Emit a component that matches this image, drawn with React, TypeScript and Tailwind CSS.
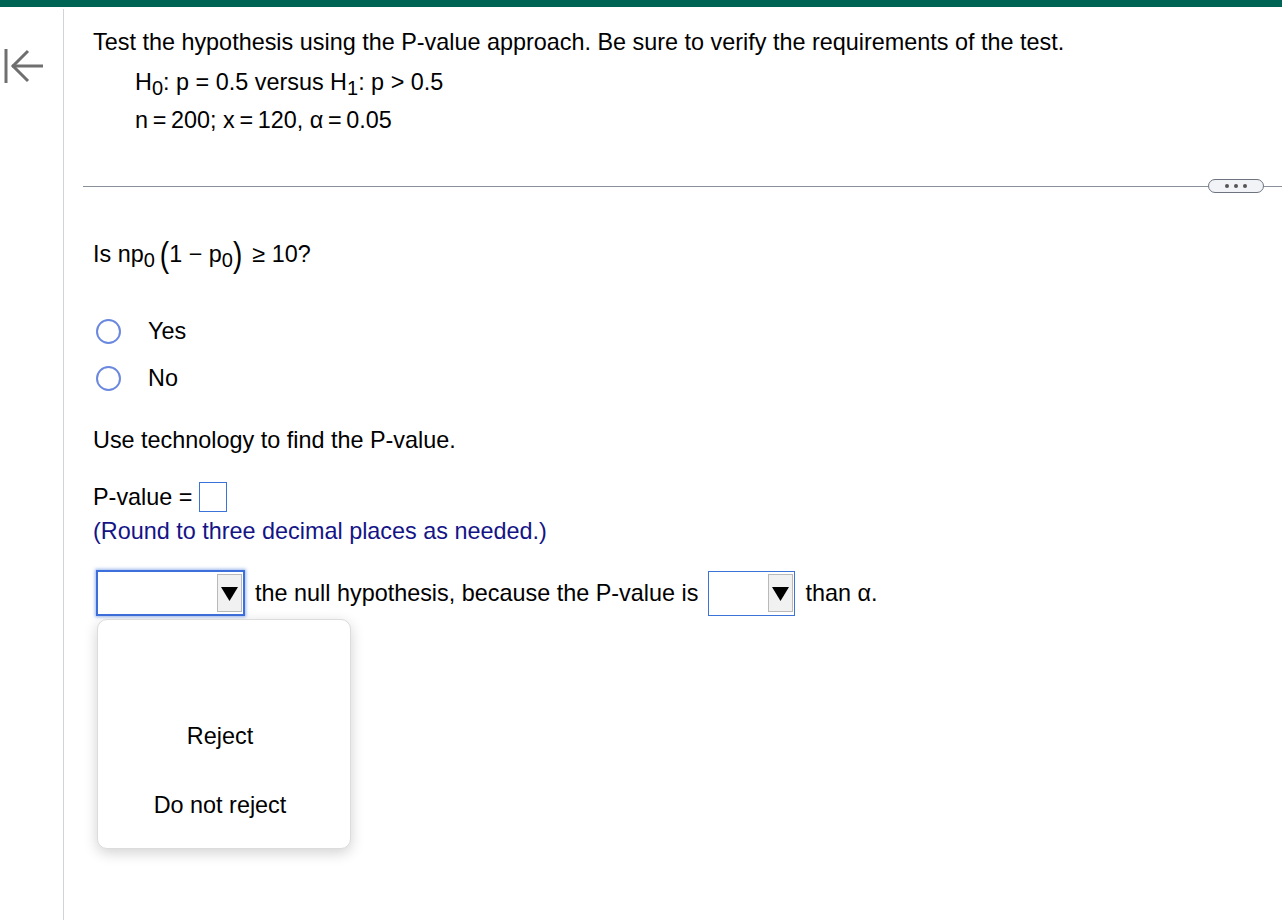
import React from "react";

function Btn() {
  return (
    <div className="h-[38px] w-[25px] bg-[#f1f1f1] border border-[#b9b9b9] flex items-center justify-center">
      <svg width="17" height="15" viewBox="0 0 17 15">
        <polygon points="0,1 17,1 8.5,15" fill="#000" />
      </svg>
    </div>
  );
}

export default function App() {
  return (
    <div className="w-[1282px] h-[920px] bg-white text-black overflow-hidden" style={{ fontFamily: '"Liberation Sans", Arial, sans-serif' }}>
      <div className="h-[7px] bg-[#006454]" />
      <div className="flex mt-[2px] h-[911px]">
        <div className="w-[64px] shrink-0 border-r border-[#cfd3da] relative">
          <svg className="absolute left-[3px] top-[39px]" width="42" height="36" viewBox="0 0 42 36">
            <line x1="3" y1="1" x2="3" y2="35" stroke="#6f6f6f" strokeWidth="3" />
            <line x1="9" y1="18" x2="40" y2="18" stroke="#6f6f6f" strokeWidth="3" />
            <polyline points="25,3 10,18 25,33" fill="none" stroke="#6f6f6f" strokeWidth="3" />
          </svg>
        </div>
        <div className="flex-1 pl-[29px] pt-[20px] text-[23.4px] leading-[26px]">
          <div>Test the hypothesis using the P-value approach. Be sure to verify the requirements of the test.</div>
          <div className="ml-[42px] mt-[14px] flex items-center h-[26px]">
            <span>H</span>
            <span className="text-[20px] relative top-[6px]">0</span>
            <span>: p = 0.5 versus H</span>
            <span className="text-[20px] relative top-[6px]">1</span>
            <span>: p &gt; 0.5</span>
          </div>
          <div className="ml-[42px] mt-[12px]">{"n\u2009=\u2009200; x\u2009=\u2009120, α\u2009=\u20090.05"}</div>

          <div className="-ml-[10px] mt-[46px] h-[14px] flex items-center">
            <div className="flex-1 h-px bg-[#8a9099]" />
            <div className="w-[56px] h-[14px] rounded-full border border-[#6d7480] bg-[#f1f3f6] flex items-center justify-center gap-[5px]">
              <span className="w-[4px] h-[4px] rounded-full bg-[#555]" />
              <span className="w-[4px] h-[4px] rounded-full bg-[#555]" />
              <span className="w-[4px] h-[4px] rounded-full bg-[#555]" />
            </div>
            <div className="w-[18px] h-px bg-[#8a9099]" />
          </div>

          <div className="mt-[48px] flex items-center h-[26px]">
            <span>Is np</span>
            <span className="text-[20px] relative top-[6px]">0</span>
            <span className="text-[28px] ml-[5px] relative top-[2px] inline-block scale-y-125">(</span>
            <span>1 − p</span>
            <span className="text-[20px] relative top-[6px]">0</span>
            <span className="text-[28px] relative top-[2px] inline-block scale-y-125">)</span>
            <span className="ml-[10px]">≥ 10?</span>
          </div>

          <div className="mt-[51px] flex items-center h-[26px]">
            <span className="ml-[3px] w-[25px] h-[25px] rounded-full border-2 border-[#6b88df] shrink-0" />
            <span className="ml-[27px]">Yes</span>
          </div>
          <div className="mt-[21px] flex items-center h-[26px]">
            <span className="ml-[3px] w-[25px] h-[25px] rounded-full border-2 border-[#6b88df] shrink-0" />
            <span className="ml-[27px]">No</span>
          </div>

          <div className="mt-[36px]">Use technology to find the P-value.</div>

          <div className="mt-[29px] flex items-center h-[30px]">
            <span>P-value =</span>
            <span className="ml-[7px] w-[28px] h-[30px] border border-[#3b73d9]" />
          </div>
          <div className="mt-[6px] text-[#141487]">(Round to three decimal places as needed.)</div>

          <div className="mt-[26px] flex items-center relative">
            <div className="ml-[3px] w-[149px] h-[46px] border-2 border-[#3d6fdc] shadow-[0_0_3px_1px_rgba(61,111,220,0.5)] flex items-center justify-end pr-[1px]">
              <Btn />
            </div>
            <span className="ml-[10px]">the null hypothesis, because the P-value is</span>
            <div className="ml-[10px] w-[87px] h-[45px] border border-[#3b73d9] flex items-center justify-end pr-[1px]">
              <Btn />
            </div>
            <span className="ml-[10px]">than α.</span>

            <div className="absolute left-[4px] top-[49px] w-[254px] h-[230px] bg-white rounded-[10px] border border-[#dcdcdc] shadow-[0_4px_14px_rgba(0,0,0,0.18)] flex flex-col items-center pr-[8px]">
              <div className="mt-[103px]">Reject</div>
              <div className="mt-[43px]">Do not reject</div>
            </div>
          </div>
        </div>
      </div>
    </div>
  );
}
